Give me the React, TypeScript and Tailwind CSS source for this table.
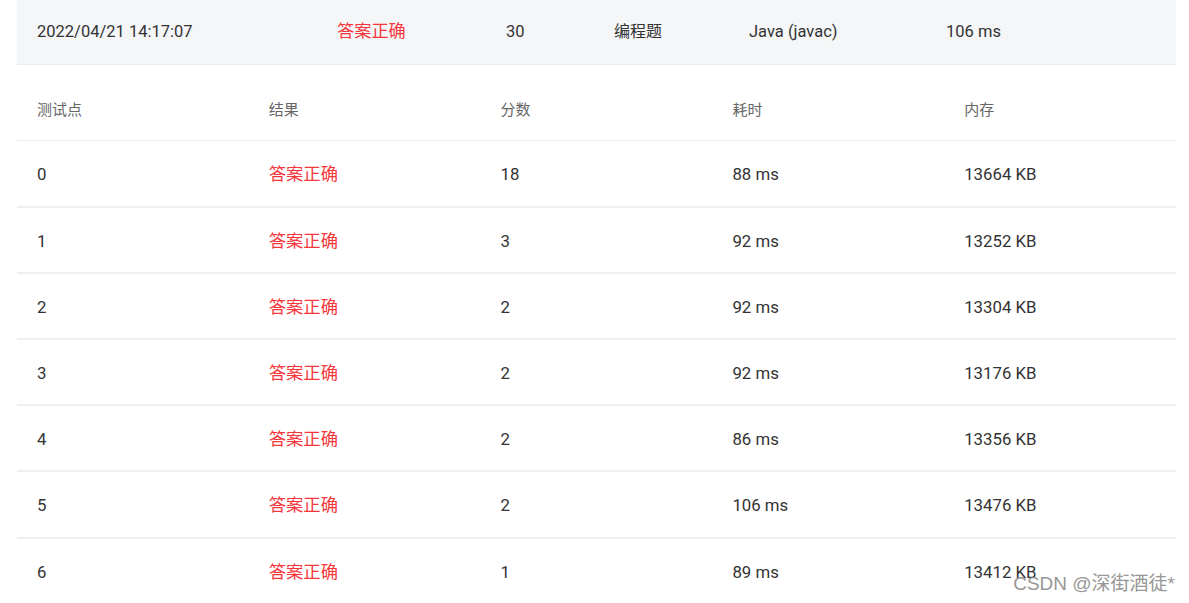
import React from "react";

const rows = [
  ["0", "18", "88 ms", "13664 KB"],
  ["1", "3", "92 ms", "13252 KB"],
  ["2", "2", "92 ms", "13304 KB"],
  ["3", "2", "92 ms", "13176 KB"],
  ["4", "2", "86 ms", "13356 KB"],
  ["5", "2", "106 ms", "13476 KB"],
  ["6", "1", "89 ms", "13412 KB"],
];

export default function App() {
  return (
    <div
      className="relative h-[603px] w-[1189px] overflow-hidden bg-white"
      style={{ fontFamily: 'Roboto, "Noto Sans CJK SC", sans-serif' }}
    >
      <div className="ml-[17px] w-[1159px]">
        <div className="flex h-[65px] items-center border-b border-[#ebebeb] bg-[#f5f6f8] pl-[20px] text-[16.5px] text-[#333]">
          <div className="w-[300px]">2022/04/21 14:17:07</div>
          <div className="w-[169px] text-[17.2px] text-[#f5363b]">答案正确</div>
          <div className="w-[108px]">30</div>
          <div className="w-[135px] text-[16px]">编程题</div>
          <div className="w-[197px]">Java (javac)</div>
          <div>106 ms</div>
        </div>
        <div className="grid h-[76px] grid-cols-5 items-center border-b border-[#ebebeb] pt-[15px] text-[15px] text-[#666]">
          <div className="pl-[20px]">测试点</div>
          <div className="pl-[20px]">结果</div>
          <div className="pl-[20px]">分数</div>
          <div className="pl-[20px]">耗时</div>
          <div className="pl-[20px]">内存</div>
        </div>
        {rows.map((r, i) => (
          <div
            key={i}
            className={`grid grid-cols-5 items-center border-b-2 border-[#efefef] pt-[3px] text-[16.8px] text-[#333] ${
              i === 0 || i === 5 ? "h-[67px]" : "h-[66px]"
            }`}
          >
            <div className="pl-[20px]">{r[0]}</div>
            <div className="pl-[20px] text-[17.3px] text-[#f5363b]">答案正确</div>
            <div className="pl-[20px]">{r[1]}</div>
            <div className="pl-[20px]">{r[2]}</div>
            <div className="pl-[20px]">{r[3]}</div>
          </div>
        ))}
      </div>
      <div
        className="absolute right-[14px] top-[570px] text-[19px] text-[#8c8c8c] opacity-90"
        style={{ fontFamily: '"Liberation Sans", "Noto Sans CJK SC", sans-serif' }}
      >
        CSDN @深街酒徒*
      </div>
    </div>
  );
}
